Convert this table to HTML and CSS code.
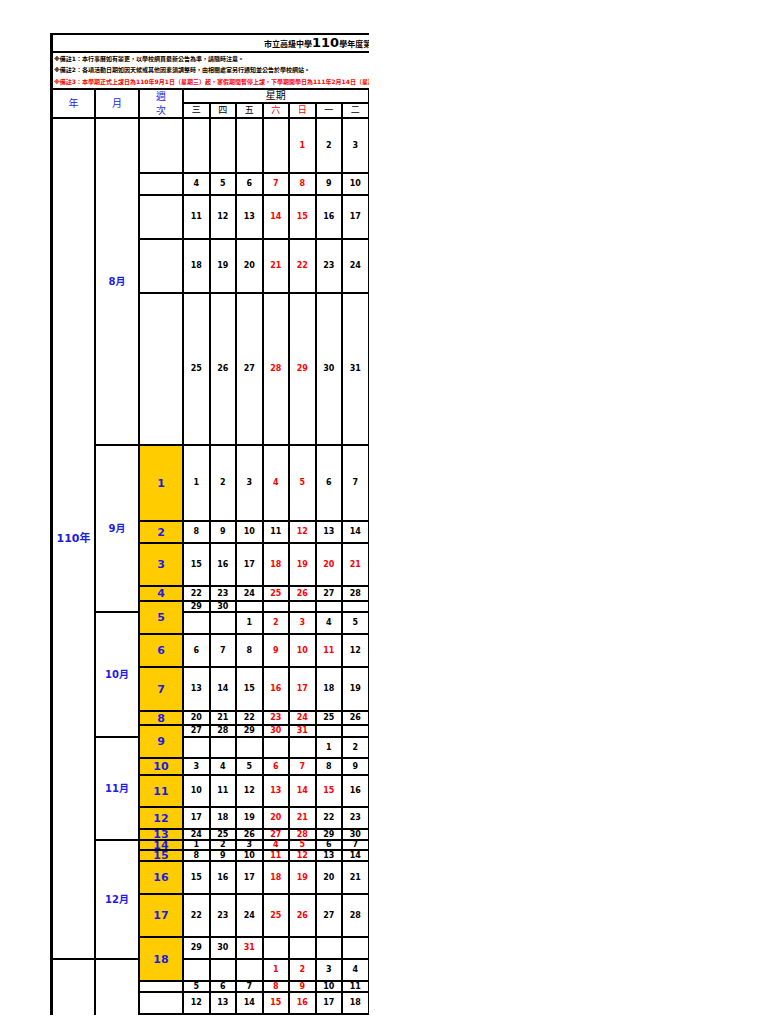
FILE: index.html
```html
<!DOCTYPE html>
<html lang="zh-Hant">
<head>
<meta charset="utf-8">
<title>110學年度第一學期行事曆</title>
<link rel="stylesheet" href="styles.css">
</head>
<body>
<div class="sheet">
  <div class="title-row"><span class="title"><span class="cj">市立高級中學</span>110<span class="cj">學年度第一學期行事曆</span></span></div>
  <div class="notes">
    <div class="note">※備註1：本行事曆如有變更，以學校網頁最新公告為準，請隨時注意。</div>
    <div class="note">※備註2：各項活動日期如因天候或其他因素須調整時，由相關處室另行通知並公告於學校網站。</div>
    <div class="note note-red">※備註3：本學期正式上課日為110年9月1日（星期三）起，寒假期間暫停上課，下學期開學日為111年2月14日（星期一）。</div>
  </div>
  <div class="cal">
    <div class="c hd rs2">年</div>
    <div class="c hd rs2">月</div>
    <div class="c hd vert rs2"><span>週</span><span>次</span></div>
    <div class="c hw cs7">星期</div>
    <div class="c dn">三</div><div class="c dn">四</div><div class="c dn">五</div><div class="c dn r">六</div><div class="c dn r">日</div><div class="c dn">一</div><div class="c dn">二</div>

    <div class="c yr rs25">110年</div>
    <div class="c m rs5">8月</div>
    <div class="c"></div>
    <div class="c d"></div><div class="c d"></div><div class="c d"></div><div class="c d"></div><div class="c d r">1</div><div class="c d">2</div><div class="c d">3</div>

    <div class="c"></div>
    <div class="c d">4</div><div class="c d">5</div><div class="c d">6</div><div class="c d r">7</div><div class="c d r">8</div><div class="c d">9</div><div class="c d">10</div>

    <div class="c"></div>
    <div class="c d">11</div><div class="c d">12</div><div class="c d">13</div><div class="c d r">14</div><div class="c d r">15</div><div class="c d">16</div><div class="c d">17</div>

    <div class="c"></div>
    <div class="c d">18</div><div class="c d">19</div><div class="c d">20</div><div class="c d r">21</div><div class="c d r">22</div><div class="c d">23</div><div class="c d">24</div>

    <div class="c"></div>
    <div class="c d">25</div><div class="c d">26</div><div class="c d">27</div><div class="c d r">28</div><div class="c d r">29</div><div class="c d">30</div><div class="c d">31</div>

    <div class="c m rs5">9月</div>
    <div class="c w">1</div>
    <div class="c d">1</div><div class="c d">2</div><div class="c d">3</div><div class="c d r">4</div><div class="c d r">5</div><div class="c d">6</div><div class="c d">7</div>

    <div class="c w">2</div>
    <div class="c d">8</div><div class="c d">9</div><div class="c d">10</div><div class="c d">11</div><div class="c d r">12</div><div class="c d">13</div><div class="c d">14</div>

    <div class="c w">3</div>
    <div class="c d">15</div><div class="c d">16</div><div class="c d">17</div><div class="c d r">18</div><div class="c d r">19</div><div class="c d r">20</div><div class="c d r">21</div>

    <div class="c w">4</div>
    <div class="c d">22</div><div class="c d">23</div><div class="c d">24</div><div class="c d r">25</div><div class="c d r">26</div><div class="c d">27</div><div class="c d">28</div>

    <div class="c w rs2">5</div>
    <div class="c d">29</div><div class="c d">30</div><div class="c d"></div><div class="c d"></div><div class="c d"></div><div class="c d"></div><div class="c d"></div>

    <div class="c m rs5">10月</div>
    <div class="c d"></div><div class="c d"></div><div class="c d">1</div><div class="c d r">2</div><div class="c d r">3</div><div class="c d">4</div><div class="c d">5</div>

    <div class="c w">6</div>
    <div class="c d">6</div><div class="c d">7</div><div class="c d">8</div><div class="c d r">9</div><div class="c d r">10</div><div class="c d r">11</div><div class="c d">12</div>

    <div class="c w">7</div>
    <div class="c d">13</div><div class="c d">14</div><div class="c d">15</div><div class="c d r">16</div><div class="c d r">17</div><div class="c d">18</div><div class="c d">19</div>

    <div class="c w">8</div>
    <div class="c d">20</div><div class="c d">21</div><div class="c d">22</div><div class="c d r">23</div><div class="c d r">24</div><div class="c d">25</div><div class="c d">26</div>

    <div class="c w rs2">9</div>
    <div class="c d">27</div><div class="c d">28</div><div class="c d">29</div><div class="c d r">30</div><div class="c d r">31</div><div class="c d"></div><div class="c d"></div>

    <div class="c m rs5">11月</div>
    <div class="c d"></div><div class="c d"></div><div class="c d"></div><div class="c d"></div><div class="c d"></div><div class="c d">1</div><div class="c d">2</div>

    <div class="c w">10</div>
    <div class="c d">3</div><div class="c d">4</div><div class="c d">5</div><div class="c d r">6</div><div class="c d r">7</div><div class="c d">8</div><div class="c d">9</div>

    <div class="c w">11</div>
    <div class="c d">10</div><div class="c d">11</div><div class="c d">12</div><div class="c d r">13</div><div class="c d r">14</div><div class="c d r">15</div><div class="c d">16</div>

    <div class="c w">12</div>
    <div class="c d">17</div><div class="c d">18</div><div class="c d">19</div><div class="c d r">20</div><div class="c d r">21</div><div class="c d">22</div><div class="c d">23</div>

    <div class="c w">13</div>
    <div class="c d">24</div><div class="c d">25</div><div class="c d">26</div><div class="c d r">27</div><div class="c d r">28</div><div class="c d">29</div><div class="c d">30</div>

    <div class="c m rs5">12月</div>
    <div class="c w">14</div>
    <div class="c d">1</div><div class="c d">2</div><div class="c d">3</div><div class="c d r">4</div><div class="c d r">5</div><div class="c d">6</div><div class="c d">7</div>

    <div class="c w">15</div>
    <div class="c d">8</div><div class="c d">9</div><div class="c d">10</div><div class="c d r">11</div><div class="c d r">12</div><div class="c d">13</div><div class="c d">14</div>

    <div class="c w">16</div>
    <div class="c d">15</div><div class="c d">16</div><div class="c d">17</div><div class="c d r">18</div><div class="c d r">19</div><div class="c d">20</div><div class="c d">21</div>

    <div class="c w">17</div>
    <div class="c d">22</div><div class="c d">23</div><div class="c d">24</div><div class="c d r">25</div><div class="c d r">26</div><div class="c d">27</div><div class="c d">28</div>

    <div class="c w rs2">18</div>
    <div class="c d">29</div><div class="c d">30</div><div class="c d r">31</div><div class="c d"></div><div class="c d"></div><div class="c d"></div><div class="c d"></div>

    <div class="c yr rs4">111年</div>
    <div class="c m rs4">1月</div>
    <div class="c d"></div><div class="c d"></div><div class="c d"></div><div class="c d r">1</div><div class="c d r">2</div><div class="c d">3</div><div class="c d">4</div>

    <div class="c"></div>
    <div class="c d">5</div><div class="c d">6</div><div class="c d">7</div><div class="c d r">8</div><div class="c d r">9</div><div class="c d">10</div><div class="c d">11</div>

    <div class="c"></div>
    <div class="c d">12</div><div class="c d">13</div><div class="c d">14</div><div class="c d r">15</div><div class="c d r">16</div><div class="c d">17</div><div class="c d">18</div>

    <div class="c"></div>
    <div class="c d">19</div><div class="c d">20</div><div class="c d">21</div><div class="c d r">22</div><div class="c d r">23</div><div class="c d">24</div><div class="c d">25</div>
  </div>
</div>
</body>
</html>
```

FILE: styles.css
```css
html, body {
  margin: 0;
  padding: 0;
  background: #fff;
}

body {
  font-family: "DejaVu Sans", "Noto Sans CJK TC", sans-serif;
  color: #000;
}

.sheet {
  margin: 33px 0 0 50px;
  width: 319px;
  height: 982px;
  overflow: hidden;
  box-sizing: border-box;
  border-left: 3px solid #000;
  background: #fff;
}

.title-row {
  height: 16px;
  border-top: 2px solid #000;
  border-bottom: 2px solid #000;
  padding-left: 211px;
  white-space: nowrap;
  font-size: 13px;
  font-weight: bold;
  line-height: 16px;
}

.title .cj {
  font-size: 8px;
}

.notes {
  height: 35px;
  padding-left: 1px;
  font-size: 6px;
  font-weight: bold;
  line-height: 11px;
  white-space: nowrap;
}

.note-red {
  color: #ff0000;
  line-height: 13px;
}

.cal {
  display: grid;
  width: max-content;
  background: #000;
  gap: 2px;
  padding: 2px 2px 0 0;
  grid-template-columns: 41px 42px 42px repeat(7, 24.5px);
  grid-template-rows:
    12px 13px
    53px 20px 42px 52px 150px
    74px 20px 41px 13px 9px
    20px 31px 42px 12px 10px
    19px 15px 30px 20px 9px
    8px 9px 31px 41px 20px
    20px 9px 20px 300px;
}

.c {
  background: #fff;
  display: flex;
  align-items: center;
  justify-content: center;
  white-space: nowrap;
  line-height: 1;
  min-width: 0;
  min-height: 0;
}

.rs2 { grid-row: span 2; }
.rs4 { grid-row: span 4; }
.rs5 { grid-row: span 5; }
.rs25 { grid-row: span 25; }
.cs7 { grid-column: span 7; }

.hd {
  color: #1c1ce6;
  font-size: 10px;
}

.vert {
  flex-direction: column;
  line-height: 14px;
}

.hw {
  font-size: 10px;
}

.dn {
  font-size: 9px;
}

.yr {
  color: #1c1ce6;
  font-size: 11px;
  font-weight: bold;
}

.m {
  color: #1c1ce6;
  font-size: 10px;
  font-weight: bold;
}

.w {
  background: #ffcc00;
  color: #1c1ce6;
  font-size: 11px;
  font-weight: bold;
}

.d {
  font-size: 8px;
  font-weight: bold;
  color: #000;
}

.r {
  color: #ff0000;
}
```
